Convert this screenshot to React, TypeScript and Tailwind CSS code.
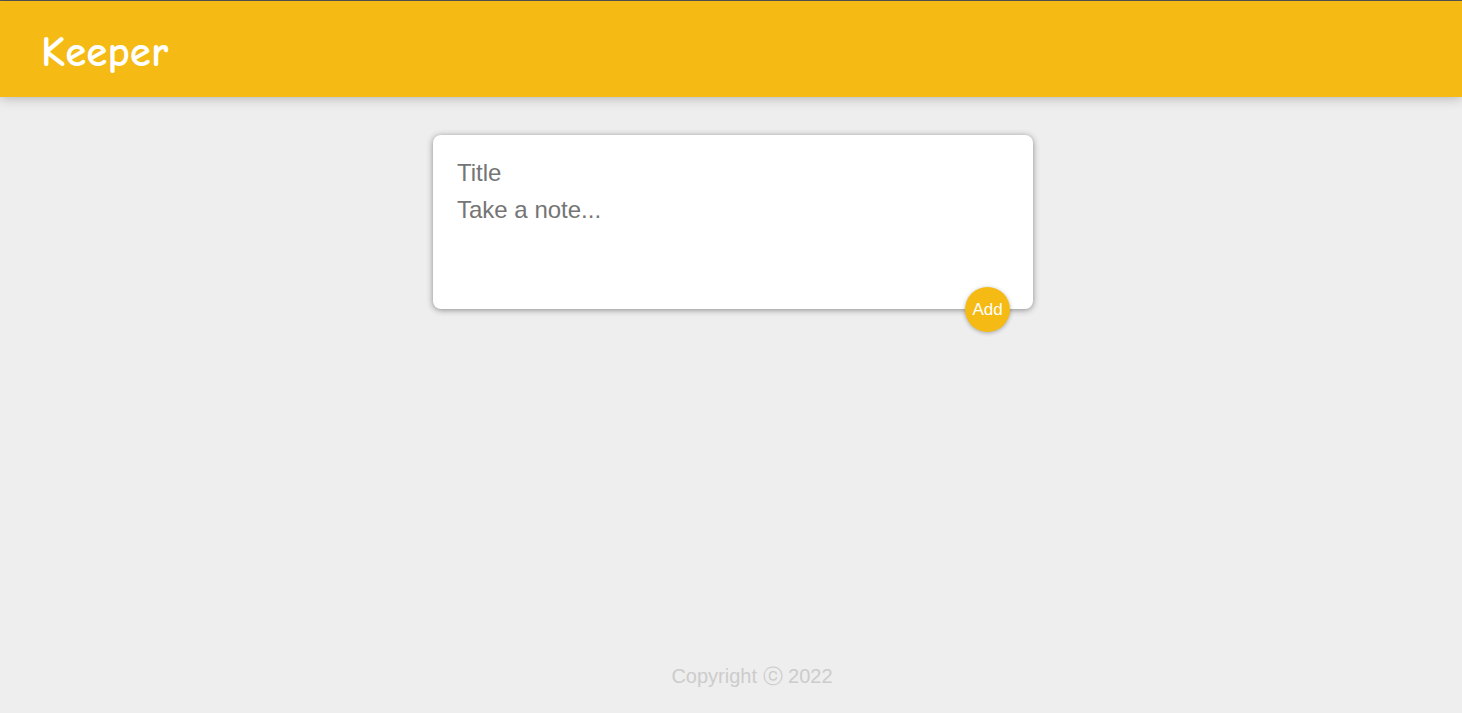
import { useState } from 'react';

export default function App() {
  const [title, setTitle] = useState('');
  const [content, setContent] = useState('');

  return (
    <div className="flex min-h-screen flex-col border-t border-[#5b5b5b] bg-[#eeeeee] font-['Liberation_Sans',Arial,sans-serif]">
      {/* Header */}
      <header className="relative z-10 flex h-[96px] items-center bg-[#f5ba13] px-[41px] pt-[6px] shadow-[0_0_12px_0_rgba(0,0,0,0.3)]">
        <h1 className="font-['Comic_Sans_MS','Comic_Neue',cursive] text-[43px] font-bold leading-none text-white">
          Keeper
        </h1>
      </header>

      {/* Create note form */}
      <main className="flex-1 pl-[4px]">
        <form
          className="relative mx-auto mt-[38px] w-[600px] rounded-[8px] bg-white p-[19px] shadow-[0_1px_6px_rgb(138,137,137)]"
          onSubmit={(e) => e.preventDefault()}
        >
          <input
            name="title"
            value={title}
            onChange={(e) => setTitle(e.target.value)}
            placeholder="Title"
            className="block h-[37px] w-full p-[5px] text-[24px] text-[#333] outline-none placeholder:text-[#757575]"
          />
          <textarea
            name="content"
            value={content}
            onChange={(e) => setContent(e.target.value)}
            placeholder="Take a note..."
            rows={3}
            className="block h-[99px] w-full resize-none p-[5px] text-[24px] leading-[28px] text-[#333] outline-none placeholder:text-[#757575]"
          />
          <button
            type="submit"
            className="absolute -bottom-[23px] right-[23px] h-[45px] w-[45px] rounded-full bg-[#f5ba13] text-[17px] text-white shadow-[0_1px_4px_rgba(0,0,0,0.3)]"
          >
            Add
          </button>
        </form>
      </main>

      {/* Footer */}
      <footer className="flex h-[74px] items-start justify-center pl-[42px] pt-[22px]">
        <p className="text-[20px] text-[#cccccc]">Copyright ⓒ 2022</p>
      </footer>
    </div>
  );
}
